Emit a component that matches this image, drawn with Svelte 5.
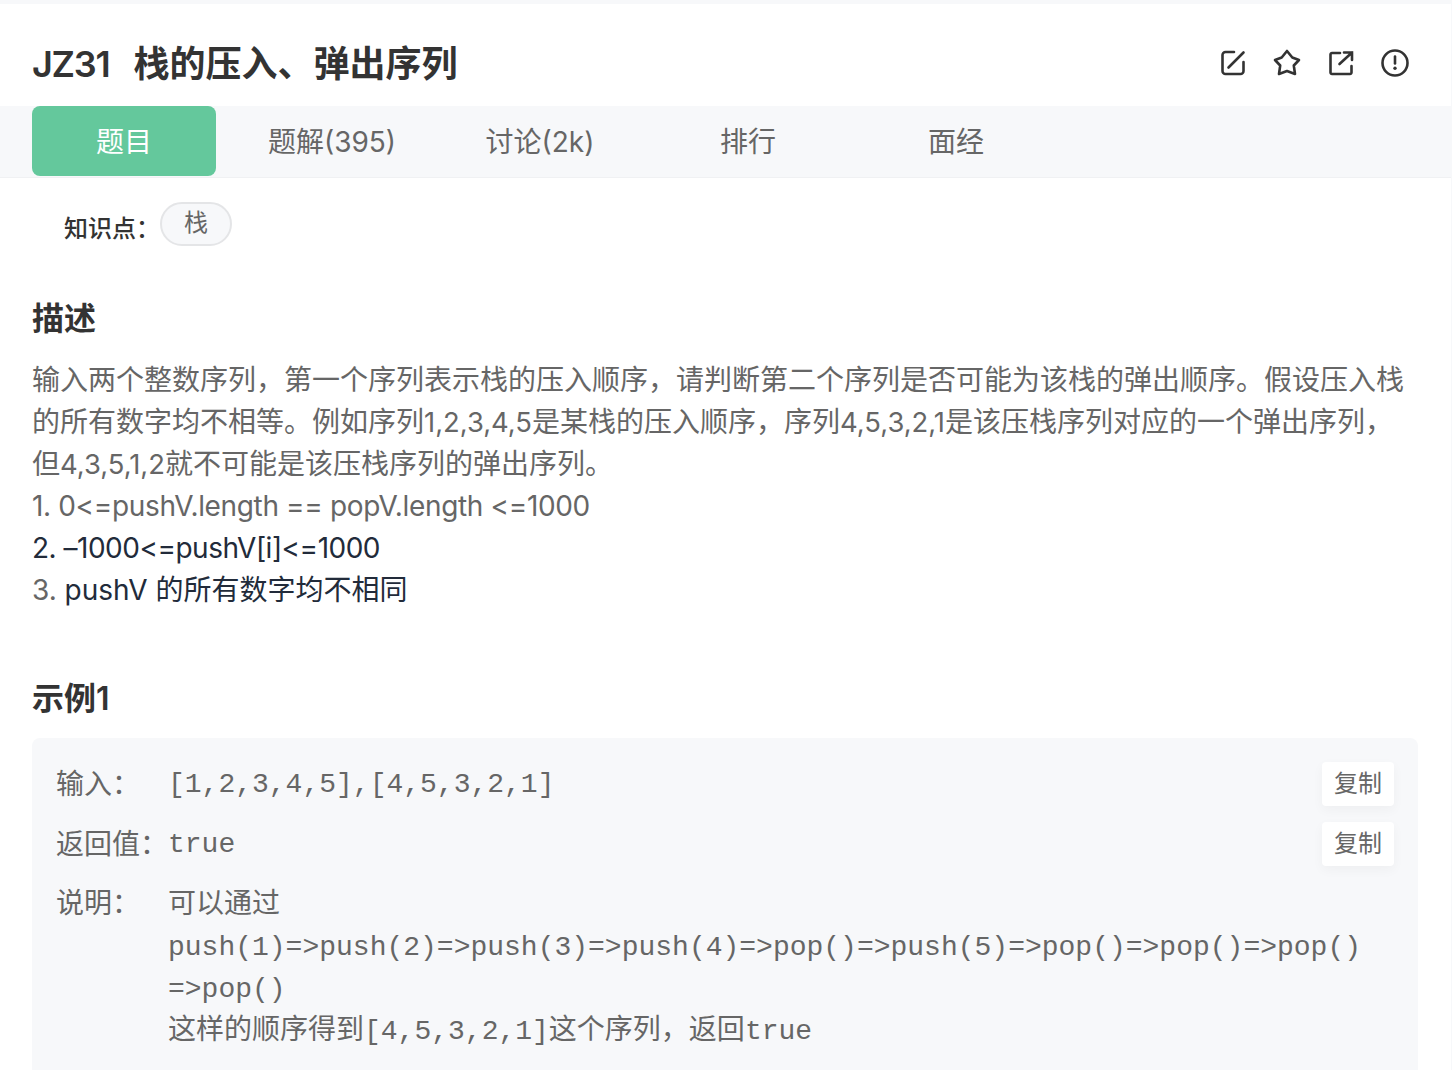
<script>
	const tabs = ['题目', '题解(395)', '讨论(2k)', '排行', '面经'];
</script>

<div class="page">
	<header class="head">
		<h1><span class="code">JZ31</span>栈的压入、弹出序列</h1>
		<div class="actions">
			<svg viewBox="0 0 28 28" class="icon"><path d="M15 3H6.500a3 3 0 0 0-3 3v16a3 3 0 0 0 3 3h15a3 3 0 0 0 3-3v-9"/><path d="M9.500 18.500 24.500 3.500"/></svg>
			<svg viewBox="0 0 28 28" class="icon"><path stroke-linejoin="round" d="M14 2 19.300 8.500 26 11 20.800 16.500 22 25 14 22 6 25 7.200 16.500 2 11 8.700 8.500z"/></svg>
			<svg viewBox="0 0 28 28" class="icon"><path d="M13 4H5a1.500 1.500 0 0 0-1.500 1.500v18A1.500 1.500 0 0 0 5 25h18a1.500 1.500 0 0 0 1.500-1.500V17"/><path d="M12.500 15 25 3.500M17 3.500h8V11"/></svg>
			<svg viewBox="0 0 28 28" class="icon"><circle cx="14" cy="14" r="12.500"/><path d="M14 7.500v7"/><circle class="dot" cx="14" cy="19.300" r="1.700"/></svg>
		</div>
	</header>

	<nav class="tabs">
		{#each tabs as tab, i}
			<div class="tab" class:active={i === 0}>{tab}</div>
		{/each}
	</nav>

	<main class="content">
		<div class="points">
			<span class="points-label">知识点：</span>
			<span class="pill">栈</span>
		</div>

		<h2 class="desc-title">描述</h2>
		<div class="desc">
			<p>输入两个整数序列，第一个序列表示栈的压入顺序，请判断第二个序列是否可能为该栈的弹出顺序。假设压入栈的所有数字均不相等。例如序列<span class="num">1,2,3,4,5</span>是某栈的压入顺序，序列<span class="num">4,5,3,2,1</span>是该压栈序列对应的一个弹出序列，但<span class="num">4,3,5,1,2</span>就不可能是该压栈序列的弹出序列。</p>
			<p class="tight">1. 0&lt;=pushV.length == popV.length &lt;=1000</p>
			<p class="dark tighter">2. –1000&lt;=pushV[i]&lt;=1000</p>
			<p>3. <span class="dark">pushV 的所有数字均不相同</span></p>
		</div>

		<h2 class="example-title">示例1</h2>
		<section class="example">
			<div class="row">
				<span class="label">输入：</span>
				<span class="value mono">[1,2,3,4,5],[4,5,3,2,1]</span>
				<button class="copy">复制</button>
			</div>
			<div class="row">
				<span class="label">返回值：</span>
				<span class="value mono">true</span>
				<button class="copy">复制</button>
			</div>
			<div class="row explain">
				<span class="label">说明：</span>
				<div class="value">
					可以通过<br />
					<span class="mono">push(1)=&gt;push(2)=&gt;push(3)=&gt;push(4)=&gt;pop()=&gt;push(5)=&gt;pop()=&gt;pop()=&gt;pop()</span><br />
					<span class="mono">=&gt;pop()</span><br />
					这样的顺序得到<span class="mono">[4,5,3,2,1]</span>这个序列，返回<span class="mono">true</span>
				</div>
			</div>
		</section>
	</main>
</div>

<style>
	:global(body) {
		background: #fff;
		font-family: Inter, "Noto Sans CJK SC", sans-serif;
		overflow: hidden;
	}

	.page {
		height: 1070px;
		padding-top: 4px;
		padding-right: 1px;
		background: #f7f8fa;
		box-sizing: border-box;
		overflow: hidden;
	}

	.head {
		display: flex;
		align-items: center;
		justify-content: space-between;
		height: 102px;
		padding: 16px 42px 0 32px;
		background: #fff;
		box-sizing: border-box;
	}

	h1 {
		margin: 0 0 4px;
		font-size: 36px;
		font-weight: 600;
		color: #333;
	}

	.code {
		margin-right: 24px;
		letter-spacing: -1.25px;
	}

	.actions {
		display: flex;
		gap: 26px;
	}

	.icon {
		width: 28px;
		height: 28px;
		fill: none;
		stroke: #333;
		stroke-width: 2.6;
		stroke-linecap: round;
	}

	.dot {
		fill: #333;
		stroke: none;
	}

	.tabs {
		display: flex;
		gap: 24px;
		height: 72px;
		padding-left: 32px;
		background: #f7f8fa;
		border-bottom: 1px solid #f0f1f3;
		box-sizing: border-box;
	}

	.tab {
		width: 184px;
		height: 70px;
		line-height: 72px;
		text-align: center;
		font-size: 28px;
		color: #666;
	}

	.tab.active {
		background: #64c89c;
		border-radius: 8px;
		color: #fff;
	}

	.content {
		height: 900px;
		padding: 24px 33px 0 32px;
		background: #fff;
	}

	.points {
		display: flex;
		align-items: flex-start;
		padding-left: 32px;
		height: 44px;
	}

	.points-label {
		width: 96px;
		margin-top: 7px;
		font-size: 24px;
		line-height: 40px;
		font-weight: 500;
		color: #333;
	}

	.pill {
		width: 72px;
		height: 44px;
		box-sizing: border-box;
		border: 2px solid #e4e5e7;
		border-radius: 22px;
		background: #f7f8fa;
		text-align: center;
		font-size: 24px;
		line-height: 38px;
		color: #666;
	}

	h2 {
		margin: 0;
		font-size: 32px;
		line-height: 44px;
		font-weight: 600;
		color: #333;
	}

	.desc-title {
		margin-top: 51px;
	}

	.desc {
		margin-top: 18px;
		font-size: 28px;
		line-height: 42px;
		color: #666;
	}

	.desc p {
		margin: 0;
	}

	.num {
		font-size: 27.4px;
		line-height: 1;
	}

	.tight {
		letter-spacing: -0.35px;
	}

	.tighter {
		letter-spacing: -0.5px;
	}

	.dark {
		color: #222b3a;
	}

	.example-title {
		margin-top: 66px;
	}

	.example {
		margin-top: 17px;
		padding: 24px;
		background: #f7f8fa;
		border-radius: 8px;
		height: 400px;
		box-sizing: border-box;
	}

	.row {
		display: grid;
		grid-template-columns: 112px 1fr 72px;
		margin-bottom: 16px;
		min-height: 44px;
		font-size: 28px;
		line-height: 44px;
		color: #666;
	}

	.row > .mono {
		padding-top: 2px;
		line-height: 42px;
	}

	.explain {
		grid-template-columns: 112px 1fr;
		line-height: 42px;
	}

	.explain .mono {
		line-height: 1;
	}

	.mono {
		font-family: "Liberation Mono", "Noto Sans CJK SC", monospace;
	}

	.copy {
		width: 72px;
		height: 44px;
		padding: 0;
		border: none;
		border-radius: 4px;
		background: #fff;
		box-shadow: 0 4px 12px rgba(0, 0, 0, 0.04);
		font: inherit;
		font-size: 24px;
		line-height: 44px;
		color: #666;
	}
</style>
